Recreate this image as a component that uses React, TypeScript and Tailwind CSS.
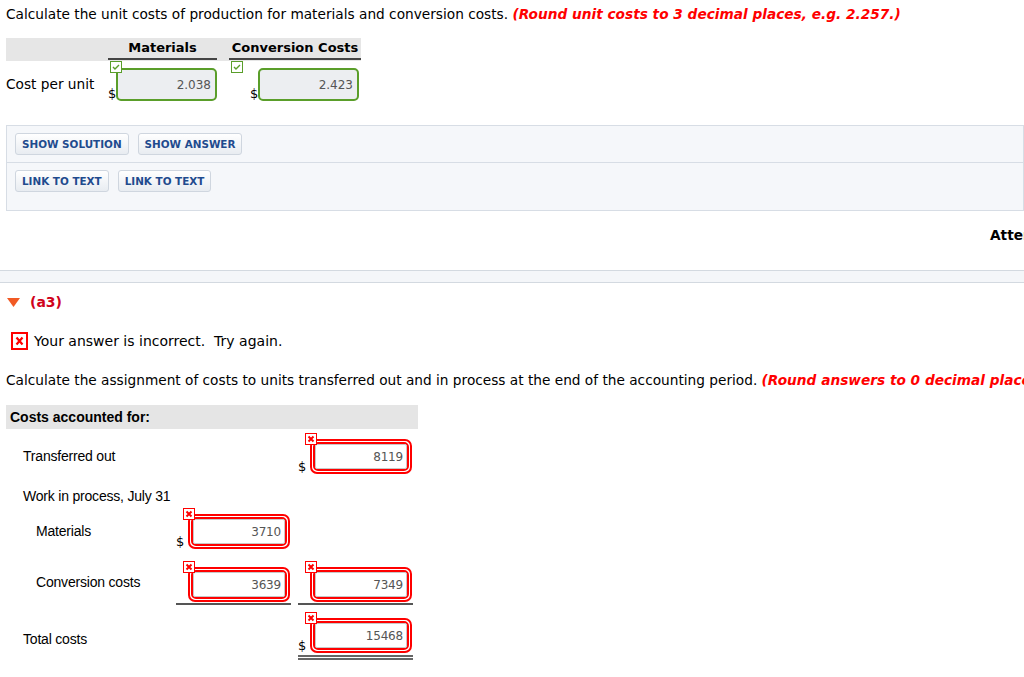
import React from 'react';

const verdana = "font-['DejaVu_Sans',Verdana,sans-serif]";
const arial = "font-['Liberation_Sans',Arial,sans-serif]";

const CheckMark = () => (
  <span className="absolute left-[2px] top-0 w-[12px] h-[12px] border border-[#5a9e2a] bg-white flex items-center justify-center">
    <svg width="8" height="6" viewBox="0 0 8 6">
      <path d="M1 3 L3 5 L7 1" fill="none" stroke="#5a9e2a" strokeWidth="1.4" />
    </svg>
  </span>
);

const CrossMark = ({ className = '' }: { className?: string }) => (
  <span className={`w-[12px] h-[12px] border border-[#f00] bg-white flex items-center justify-center ${className}`}>
    <svg width="8" height="8" viewBox="0 0 8 8">
      <path d="M1.5 1.5 L6.5 6.5 M6.5 1.5 L1.5 6.5" fill="none" stroke="#f00" strokeWidth="2" />
    </svg>
  </span>
);

const GreenCell = ({ value }: { value: string }) => (
  <div className="relative pt-[7px] flex items-end justify-end">
    <CheckMark />
    <span className={`${verdana} text-[13px] leading-[15px] text-black w-[8px]`}>$</span>
    <div className="w-[101px] h-[33px] rounded-[5px] border-2 border-[#5a9e2a] bg-[#eceef1] flex items-center justify-end pr-[4px]">
      <span className={`${verdana} text-[12px] text-[#555]`}>{value}</span>
    </div>
  </div>
);

const RedCell = ({ value, dollar, line }: { value: string; dollar?: boolean; line?: 'single' | 'double' }) => (
  <div className="flex flex-col">
    <div className="relative pt-[6px] flex items-end">
      <CrossMark className="absolute left-[7px] top-0 z-10" />
      <span className={`${verdana} text-[13px] leading-[15px] text-black w-[12px]`}>{dollar ? '$' : ''}</span>
      <div className="w-[102px] h-[35px] rounded-[7px] border-2 border-[#f00] bg-white p-[1px]">
        <div className="h-full rounded-[5px] border-2 border-[#f00]">
          <div className="h-full rounded-[2px] border border-[#c8c8c8] bg-white flex items-center justify-end pr-[3px]">
            <span className={`${verdana} text-[12px] text-[#555]`}>{value}</span>
          </div>
        </div>
      </div>
    </div>
    {line === 'single' && <div className="mt-px h-[2px] bg-[#555] w-[115px]" />}
    {line === 'double' && (
      <div className="mt-[2px] w-[115px] flex flex-col gap-px">
        <div className="h-[2px] bg-[#666]" />
        <div className="h-[2px] bg-[#666]" />
      </div>
    )}
  </div>
);

const Btn = ({ label }: { label: string }) => (
  <button className={`${verdana} h-[22px] px-[6px] rounded-[3px] border border-[#cfd6df] bg-gradient-to-b from-white to-[#e8ecf1] text-[10.4px] font-bold text-[#1f4b8e] leading-none`}>
    {label}
  </button>
);

export default function App() {
  return (
    <div className="w-[1024px] h-[677px] overflow-hidden bg-white text-black">
      {/* Part a2 */}
      <div className={`${verdana} text-[13.7px] leading-[18px] pl-[6px] pt-[5px] whitespace-nowrap`}>
        Calculate the unit costs of production for materials and conversion costs.{' '}
        <span className="font-bold italic text-[#f00]">(Round unit costs to 3 decimal places, e.g. 2.257.)</span>
      </div>

      <div className="ml-[6px] mt-[15px] w-[355px]">
        <div className={`${verdana} h-[23px] bg-[#e6e6e6] grid grid-cols-[102px_109px_12px_132px] text-[13px] font-bold`}>
          <div />
          <div className="border-b-2 border-[#444] flex items-center justify-center mb-[1px]">Materials</div>
          <div />
          <div className="border-b-2 border-[#444] flex items-center justify-center mb-[1px]">Conversion Costs</div>
        </div>
        <div className="grid grid-cols-[102px_109px_12px_132px]">
          <div className={`${verdana} text-[13.7px] pt-[13px] whitespace-nowrap`}>Cost per unit</div>
          <GreenCell value="2.038" />
          <div />
          <div className="pr-[2px]">
            <GreenCell value="2.423" />
          </div>
        </div>
      </div>

      <div className="ml-[6px] mt-[24px] border border-[#d7dde5] bg-[#f5f7fa]">
        <div className="h-[37px] flex items-center gap-[9px] pl-[8px] border-b border-[#d7dde5]">
          <Btn label="SHOW SOLUTION" />
          <Btn label="SHOW ANSWER" />
        </div>
        <div className="h-[47px] flex items-start pt-[7px] gap-[9px] pl-[8px]">
          <Btn label="LINK TO TEXT" />
          <Btn label="LINK TO TEXT" />
        </div>
      </div>

      <div className={`${verdana} pl-[990px] mt-[15px] h-[18px] text-[13.7px] font-bold whitespace-nowrap leading-[18px]`}>
        Attempts: 1 of 3 used
      </div>

      <div className="mt-[26px] h-[13px] border-y border-[#d3d9e0] bg-[#f4f6f9]" />

      {/* Part a3 */}
      <div className={`${verdana} mt-[10px] pl-[7px] flex items-center gap-[10px] h-[18px]`}>
        <svg width="13" height="9" viewBox="0 0 13 9">
          <path d="M0 0 H13 L6.5 9 Z" fill="#f15a24" />
        </svg>
        <span className="text-[14px] font-bold text-[#d0021b]">(a3)</span>
      </div>

      <div className={`${verdana} mt-[21px] pl-[11px] flex items-center gap-[6px] h-[18px]`}>
        <span className="w-[17px] h-[18px] border-2 border-[#f00] bg-white flex items-center justify-center">
          <svg width="9" height="10" viewBox="0 0 9 10">
            <path d="M1.5 1.5 L7.5 8.5 M7.5 1.5 L1.5 8.5" fill="none" stroke="#f00" strokeWidth="2.2" />
          </svg>
        </span>
        <span className="text-[14px] whitespace-nowrap">Your answer is incorrect.&nbsp; Try again.</span>
      </div>

      <div className={`${verdana} mt-[21px] pl-[6px] text-[13.7px] leading-[18px] whitespace-nowrap`}>
        Calculate the assignment of costs to units transferred out and in process at the end of the accounting period.{' '}
        <span className="font-bold italic text-[#f00]">(Round answers to 0 decimal places, e.g. 5,275.)</span>
      </div>

      <div className="ml-[6px] mt-[16px] w-[412px]">
        <div className={`${arial} h-[24px] bg-[#e5e5e5] pl-[4px] flex items-center text-[14px] font-bold`}>
          Costs accounted for:
        </div>
        <div className={`${arial} grid grid-cols-[170px_122px_122px] text-[14px] tracking-[-0.2px]`}>
          <div className="pl-[17px] pt-[17px]">Transferred out</div>
          <div />
          <div className="pt-[4px]">
            <RedCell value="8119" dollar />
          </div>

          <div className="pl-[17px] pt-[12px] h-[34px] col-span-3">Work in process, July 31</div>

          <div className="pl-[30px] pt-[13px]">Materials</div>
          <RedCell value="3710" dollar />
          <div />

          <div className="pl-[30px] pt-[23px]">Conversion costs</div>
          <div className="pt-[12px]">
            <RedCell value="3639" line="single" />
          </div>
          <div className="pt-[12px]">
            <RedCell value="7349" line="single" />
          </div>

          <div className="pl-[17px] pt-[24px]">Total costs</div>
          <div />
          <div className="pt-[7px]">
            <RedCell value="15468" dollar line="double" />
          </div>
        </div>
      </div>
    </div>
  );
}
